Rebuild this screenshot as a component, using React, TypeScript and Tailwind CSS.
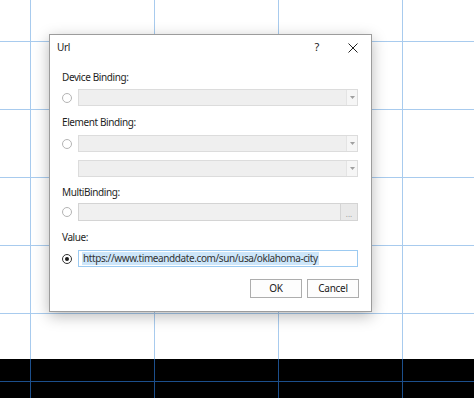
import React from 'react';

const font = { fontFamily: '"Noto Sans", "Open Sans", sans-serif' };

function Radio({ checked = false }: { checked?: boolean }) {
  return (
    <div className="w-[16px] flex items-center shrink-0">
      <div
        className={`w-[10px] h-[10px] rounded-full border flex items-center justify-center bg-white ${
          checked ? 'border-[#333333]' : 'border-[#b4b4b4]'
        }`}
      >
        {checked && <div className="w-[4px] h-[4px] rounded-full bg-[#1a1a1a]" />}
      </div>
    </div>
  );
}

function Combo() {
  return (
    <div className="flex-1 h-[17px] flex border border-[#dcdcdc] bg-[#efefef]">
      <div className="flex-1" />
      <div className="w-[11px] flex items-center justify-center bg-[#f6f6f6] border-l border-[#e4e4e4]">
        <svg width="5" height="3" viewBox="0 0 5 3">
          <path d="M0 0 L5 0 L2.5 3 Z" fill="#a0a0a0" />
        </svg>
      </div>
    </div>
  );
}

function Label({ children, className = '' }: { children: React.ReactNode; className?: string }) {
  return (
    <div className={`h-[14px] leading-[14px] text-[10px] tracking-[-0.4px] text-[#1e1e1e] ${className}`}>
      {children}
    </div>
  );
}

export default function App() {
  return (
    <div className="w-[474px] h-[398px] flex flex-col overflow-hidden" style={font}>
      <div className="h-[359px] bg-white bg-[linear-gradient(to_right,#a8cbee_1px,transparent_1px),linear-gradient(to_bottom,#a8cbee_1px,transparent_1px)] bg-[size:124px_68px] bg-[position:30px_41px] pt-[34px] pl-[49px]">
        <div className="w-[323px] h-[278px] bg-white border border-[#9c9c9c] shadow-[0_4px_14px_rgba(0,0,0,0.28)] flex flex-col">
          <div className="h-[25px] flex items-center pl-[7px] pr-[13px] text-[10px] text-[#1a1a1a]">
            <span className="flex-1 tracking-[-0.4px]">Url</span>
            <span className="w-[10px] text-center mr-[26px] text-[11px]">?</span>
            <svg width="10" height="10" viewBox="0 0 10 10">
              <path d="M0.5 0.5 L9.5 9.5 M9.5 0.5 L0.5 9.5" stroke="#222" strokeWidth="1" />
            </svg>
          </div>
          <div className="flex flex-col pl-[12px] pr-[13px]">
            <Label className="mt-[10px]">Device Binding:</Label>
            <div className="flex mt-[5px]">
              <Radio />
              <Combo />
            </div>
            <Label className="mt-[9px]">Element Binding:</Label>
            <div className="flex mt-[6px]">
              <Radio />
              <Combo />
            </div>
            <div className="flex mt-[8px]">
              <div className="w-[16px]" />
              <Combo />
            </div>
            <Label className="mt-[8px]">MultiBinding:</Label>
            <div className="flex mt-[4px]">
              <Radio />
              <div className="flex-1 h-[18px] flex border border-[#d4d4d4] bg-[#f0f0f0]">
                <div className="flex-1" />
                <div className="w-[17px] bg-[#e9e9e9] border-l border-[#d4d4d4] flex items-end justify-center pb-[2px]">
                  <span className="text-[8px] leading-[8px] text-[#9a9a9a]">...</span>
                </div>
              </div>
            </div>
            <Label className="mt-[9px]">Value:</Label>
            <div className="flex mt-[6px]">
              <Radio checked />
              <div className="flex-1 h-[17px] flex items-center border border-[#9ccaf1] bg-white pl-[3px]">
                <span className="text-[10px] leading-[13px] tracking-[-0.4px] text-[#333] bg-[#cde6fa] px-[1px]">
                  https://www.timeanddate.com/sun/usa/oklahoma-city
                </span>
              </div>
            </div>
            <div className="flex justify-end gap-[5px] mt-[12px] mr-[-1px]">
              <button className="w-[52px] h-[19px] border border-[#adadad] bg-[#fdfdfd] text-[10px] tracking-[-0.3px] text-[#1a1a1a] flex items-center justify-center">
                OK
              </button>
              <button className="w-[52px] h-[19px] border border-[#adadad] bg-[#fdfdfd] text-[10px] tracking-[-0.3px] text-[#1a1a1a] flex items-center justify-center">
                Cancel
              </button>
            </div>
          </div>
        </div>
      </div>
      <div className="flex-1 bg-black bg-[linear-gradient(to_right,#1c4f8c_1px,transparent_1px),linear-gradient(to_bottom,#1c4f8c_1px,transparent_1px)] bg-[size:124px_68px] bg-[position:30px_22px]" />
    </div>
  );
}
